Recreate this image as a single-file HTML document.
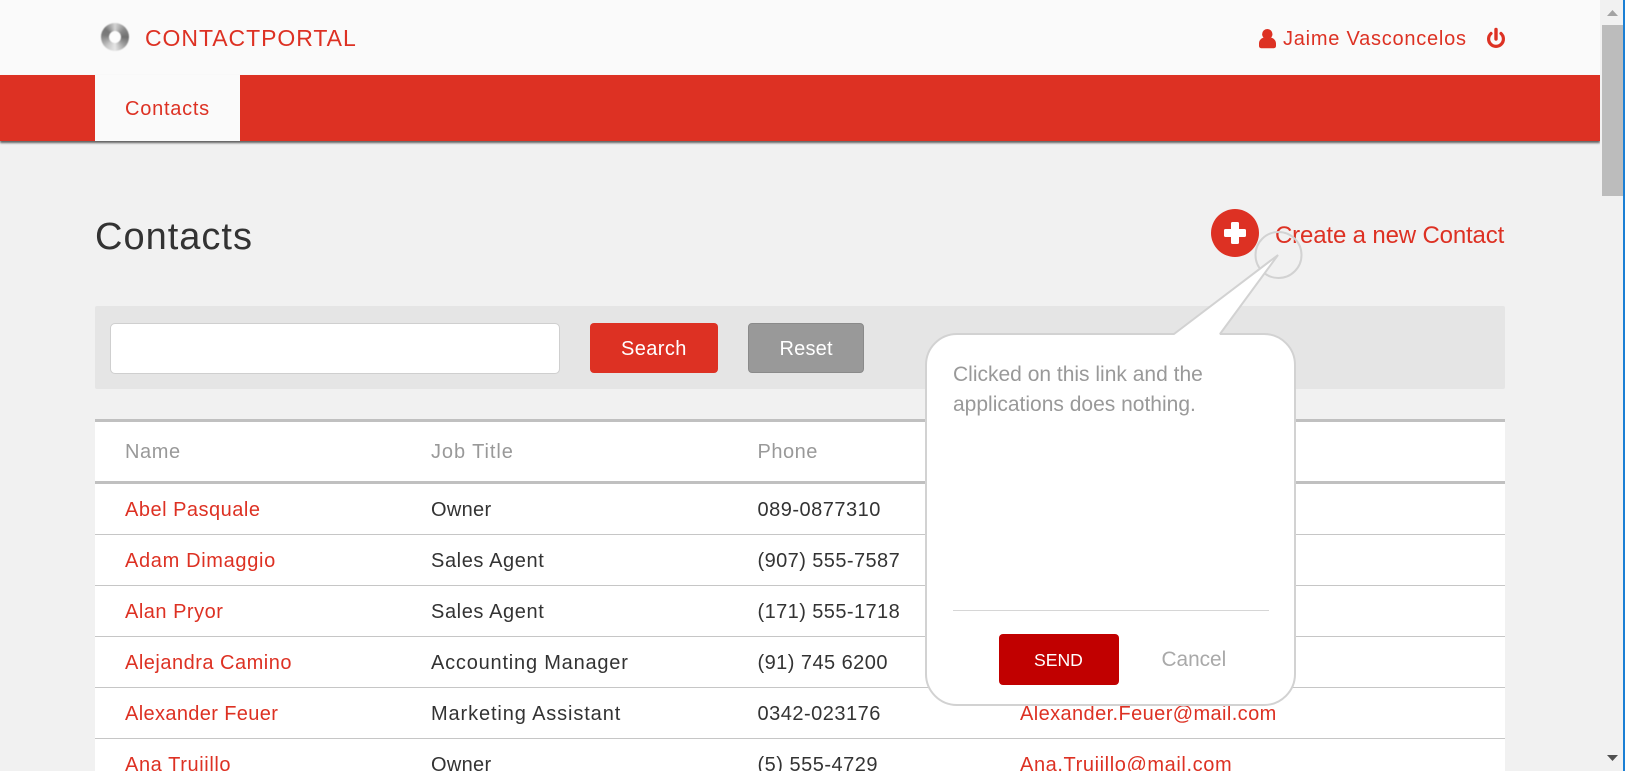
<!DOCTYPE html>
<html lang="en">
<head>
<meta charset="utf-8">
<title>ContactPortal</title>
<style>
html,body{margin:0;padding:0;width:1625px;height:771px;overflow:hidden;background:#f1f1f1;font-family:"Liberation Sans",Arial,sans-serif}
#page{position:relative;width:1625px;height:771px;overflow:hidden;background:#f1f1f1}
.a{position:absolute}
.t{position:absolute;white-space:nowrap;line-height:1;font-size:20px;letter-spacing:.5px}
.r{color:#dd3123}
#hdr{left:0;top:0;width:1600px;height:75px;background:#fafafa}
#nav{left:0;top:75px;width:1600px;height:66px;background:#dd3123;box-shadow:0 2px 2px rgba(0,0,0,.6)}
#tab{left:95px;top:75px;width:145px;height:66px;background:#fafafa}
#logo{left:101px;top:23px;width:28px;height:28px;border-radius:50%;filter:blur(.4px);background:conic-gradient(from 0deg,#d4d4d4,#8a8a8a 50deg,#6f6f6f 90deg,#9c9c9c 130deg,#e6e6e6 180deg,#c8c8c8 220deg,#7c7c7c 280deg,#777 310deg,#d4d4d4)}
#hole{left:109px;top:31px;width:12px;height:12px;border-radius:50%;background:#fdfdfd;filter:blur(.4px)}
#bar{left:95px;top:306px;width:1410px;height:83px;background:#e5e5e5;border-radius:2px}
#inp{left:110px;top:323px;width:448px;height:49px;background:#fff;border:1px solid #cfcfcf;border-radius:5px}
#sb{left:590px;top:323px;width:128px;height:50px;background:#dd3123;border-radius:4px}
#rb{left:748px;top:323px;width:114px;height:48px;background:#999;border:1px solid #8a8a8a;border-radius:4px}
#tbl{left:95px;top:419px;width:1410px;height:352px;background:#fff;border-top:3px solid #c0c0c0;box-sizing:border-box}
#th{left:95px;top:481px;width:1410px;height:3px;background:#c0c0c0}
.ln{position:absolute;left:95px;width:1410px;height:1px;background:#c6c6c6}
.h{color:#999}
.d{color:#333}
#sc{left:1600px;top:0;width:23px;height:771px;background:#f1f1f1}
#th2{left:1602px;top:25px;width:21px;height:171px;background:#bcbcbc}
#bl{left:1623px;top:0;width:2px;height:771px;background:#1a7fd4}
#pop{left:0;top:0}
#send{left:999px;top:634px;width:120px;height:51px;background:#c10000;border-radius:4px}
#div{left:953px;top:610px;width:316px;height:1px;background:#d6d6d6}
</style>
</head>
<body>
<div id="page">
<div class="a" id="hdr"></div>
<div class="a" id="nav"></div>
<div class="a" id="tab"></div>
<div class="a" id="logo"></div>
<div class="a" id="hole"></div>
<div class="t r" style="left:145px;top:27px;font-size:23px;letter-spacing:.95px">CONTACTPORTAL</div>
<div class="t r" style="left:125px;top:99px;letter-spacing:.75px">Contacts</div>

<svg class="a" style="left:0;top:0" width="1625" height="120" viewBox="0 0 1625 120">
<circle cx="1267.3" cy="34.2" r="5.2" fill="#dd3123"/>
<path d="M1259 46V43.5C1259 40.5 1261 38.3 1263.5 37.6C1266 39.5 1269 39.5 1271.2 37.6C1273.8 38.3 1276 40.5 1276 43.5V46C1276 47.3 1275 48.2 1273.8 48.2H1261.2C1260 48.2 1259 47.3 1259 46Z" fill="#dd3123"/>
<path d="M1491 33.5A7.4 7.4 0 1 0 1501 33.5" fill="none" stroke="#dd3123" stroke-width="3.2" stroke-linecap="round"/>
<path d="M1496 29.5V39" fill="none" stroke="#dd3123" stroke-width="3.4" stroke-linecap="round"/>
</svg>
<div class="t r" style="left:1283px;top:29px;letter-spacing:.76px">Jaime Vasconcelos</div>

<div class="t" style="left:95px;top:218px;font-size:38px;letter-spacing:1px;color:#333">Contacts</div>
<svg class="a" style="left:1211px;top:209px" width="48" height="48" viewBox="0 0 48 48">
<circle cx="24" cy="24" r="24" fill="#dd3123"/>
<rect x="13" y="20" width="22" height="8" rx="1.5" fill="#fff"/>
<rect x="20" y="13" width="8" height="22" rx="1.5" fill="#fff"/>
</svg>
<div class="t r" style="left:1275px;top:224px;font-size:24px;letter-spacing:-.15px">Create a new Contact</div>

<div class="a" id="bar"></div>
<div class="a" id="inp"></div>
<div class="a" id="sb"></div>
<div class="t" style="left:621px;top:339px;color:#fff;letter-spacing:.4px">Search</div>
<div class="a" id="rb"></div>
<div class="t" style="left:779.5px;top:339px;color:#fff;letter-spacing:.2px">Reset</div>

<div class="a" id="tbl"></div>
<div class="a" id="th"></div>
<div class="t h" style="left:125px;top:442px;letter-spacing:.6px">Name</div>
<div class="t h" style="left:431px;top:442px;letter-spacing:.92px">Job Title</div>
<div class="t h" style="left:757.5px;top:442px">Phone</div>

<div class="ln" style="top:534px"></div>
<div class="ln" style="top:585px"></div>
<div class="ln" style="top:636px"></div>
<div class="ln" style="top:687px"></div>
<div class="ln" style="top:738px"></div>

<div class="t r" style="left:125px;top:500px">Abel Pasquale</div>
<div class="t d" style="left:431px;top:500px;letter-spacing:.3px">Owner</div>
<div class="t d" style="left:757.5px;top:500px">089-0877310</div>

<div class="t r" style="left:125px;top:551px;letter-spacing:.66px">Adam Dimaggio</div>
<div class="t d" style="left:431px;top:551px;letter-spacing:.6px">Sales Agent</div>
<div class="t d" style="left:757.5px;top:551px;letter-spacing:.42px">(907) 555-7587</div>

<div class="t r" style="left:125px;top:602px">Alan Pryor</div>
<div class="t d" style="left:431px;top:602px;letter-spacing:.6px">Sales Agent</div>
<div class="t d" style="left:757.5px;top:602px;letter-spacing:.42px">(171) 555-1718</div>

<div class="t r" style="left:125px;top:653px">Alejandra Camino</div>
<div class="t d" style="left:431px;top:653px;letter-spacing:.79px">Accounting Manager</div>
<div class="t d" style="left:757.5px;top:653px;letter-spacing:.45px">(91) 745 6200</div>

<div class="t r" style="left:125px;top:704px;letter-spacing:.36px">Alexander Feuer</div>
<div class="t d" style="left:431px;top:704px;letter-spacing:.88px">Marketing Assistant</div>
<div class="t d" style="left:757.5px;top:704px">0342-023176</div>
<div class="t r" style="left:1020px;top:704px;letter-spacing:.4px">Alexander.Feuer@mail.com</div>

<div class="t r" style="left:125px;top:755px;letter-spacing:.6px">Ana Trujillo</div>
<div class="t d" style="left:431px;top:755px;letter-spacing:.3px">Owner</div>
<div class="t d" style="left:757.5px;top:755px">(5) 555-4729</div>
<div class="t r" style="left:1020px;top:755px;letter-spacing:.6px">Ana.Trujillo@mail.com</div>

<svg class="a" id="pop" width="1625" height="771" viewBox="0 0 1625 771">
<circle cx="1278.5" cy="255" r="23" fill="none" stroke="#d2d2d2" stroke-width="2"/>
<path d="M957 334H1174L1278 255L1220 334H1264A31 31 0 0 1 1295 365V674A31 31 0 0 1 1264 705H957A31 31 0 0 1 926 674V365A31 31 0 0 1 957 334Z" fill="#fff" stroke="#d2d2d2" stroke-width="2" stroke-linejoin="bevel"/>
</svg>
<div class="t" style="left:953px;top:364px;font-size:21px;letter-spacing:0;color:#999">Clicked on this link and the</div>
<div class="t" style="left:953px;top:394px;font-size:21px;letter-spacing:0;color:#999">applications does nothing.</div>
<div class="a" id="div"></div>
<div class="a" id="send"></div>
<div class="t" style="left:1034px;top:652px;font-size:17.6px;letter-spacing:0;color:#fff">SEND</div>
<div class="t" style="left:1161.5px;top:650px;font-size:20.8px;letter-spacing:0;color:#a9a9a9">Cancel</div>

<div class="a" id="sc"></div>
<div class="a" id="th2"></div>
<svg class="a" style="left:1600px;top:0" width="23" height="771" viewBox="0 0 23 771">
<path d="M7 16L12.5 10L18 16Z" fill="#a3a3a3"/>
<path d="M7 755L12.5 761L18 755Z" fill="#505050"/>
</svg>
<div class="a" id="bl"></div>
</div>
</body>
</html>
